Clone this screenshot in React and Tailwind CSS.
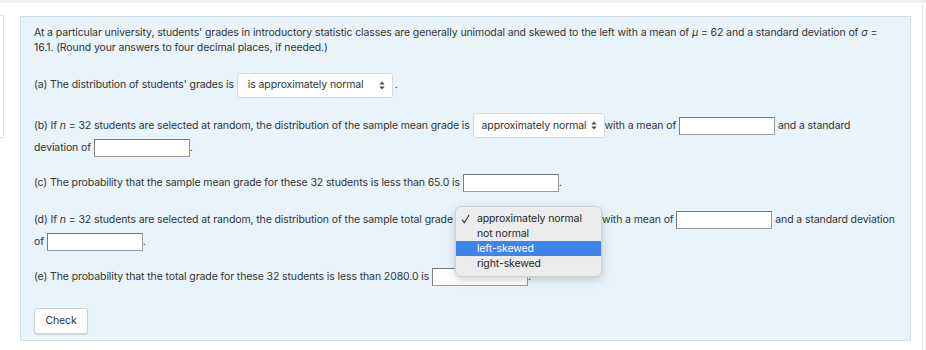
import React from "react"

const font = { fontFamily: "Inter, 'Liberation Sans', sans-serif" }

const SortIcon = () => (
  <svg width="6" height="9" viewBox="0 0 6 9" className="inline-block shrink-0">
    <path d="M3 0.5 L5.6 3.6 L0.4 3.6 Z" fill="#444" />
    <path d="M3 8.5 L5.6 5.4 L0.4 5.4 Z" fill="#444" />
  </svg>
)

const Check = () => (
  <svg width="9" height="10" viewBox="0 0 9 10">
    <path d="M1 5.6 L3.4 8.8 L8 1" fill="none" stroke="#333" strokeWidth="1.1" />
  </svg>
)

const Select = ({ label, width, pl = "pl-[8px]" }) => (
  <span
    className={`inline-flex items-center justify-between h-[25px] ${pl} pr-[7px] bg-white border border-[#dadada] rounded-[3px] align-middle ${width}`}
  >
    <span>{label}</span>
    <SortIcon />
  </span>
)

const Input = ({ width = "w-[96px]" }) => (
  <span
    className={`inline-block h-[18px] ${width} bg-white border border-[#9a9a9a] border-t-[#767676] border-l-[#7d7d7d] align-middle`}
  />
)

const Line = ({ h, mt, children }) => (
  <div className={`flex items-center whitespace-pre ${h} ${mt}`}>{children}</div>
)

const Popup = () => {
  const items = ["approximately normal", "not normal", "left-skewed", "right-skewed"]
  return (
    <div className="absolute left-0 top-[-2px] w-[147px] pt-[4px] pb-[5px] bg-[#ececec] border border-[#cfcfcf] rounded-[6px] shadow-[0_3px_10px_rgba(0,0,0,0.18)] z-10 overflow-hidden">
      {items.map((it, i) => (
        <div
          key={it}
          className={`flex items-center h-[15px] ${i === 2 ? "bg-[#3d85eb] text-white" : "text-[#262626]"}`}
        >
          <span className="w-[21px] pl-[5px] flex items-center">{i === 0 ? <Check /> : null}</span>
          <span>{it}</span>
        </div>
      ))}
    </div>
  )
}

export default function App() {
  return (
    <div className="w-[926px] h-[350px] bg-white overflow-hidden text-[10.5px] tracking-[-0.11px] text-[#333]" style={font}>
      <div className="h-[3px] bg-[#f2f2f2]" />
      <div className="flex items-start">
        <div className="w-[4px] h-[123px] mt-[12px] bg-white border border-l-0 border-[#e2e2e2]" />
        <div className="ml-[16px] mt-[13px] w-[892px] bg-[#e8f4fa] border border-[#cfe0e8] pl-[13px] pr-[10px] pt-[8px] pb-[6px]">
          <div className="leading-[15px]">
            <div className="whitespace-pre">
              At a particular university, students' grades in introductory statistic classes are generally unimodal and skewed to the left with a mean of <i>μ</i> = 62 and a standard deviation of <i>σ</i> =
            </div>
            <div>16.1. (Round your answers to four decimal places, if needed.)</div>
          </div>

          <Line h="h-[24px]" mt="mt-[18px]">
            (a) The distribution of students' grades is{" "}
            <Select label="is approximately normal" width="w-[156px]" pl="pl-[10px]" />
            <span className="ml-[2px]">.</span>
          </Line>

          <Line h="h-[25px]" mt="mt-[16px]">
            (b) If <i>n</i> = 32 students are selected at random, the distribution of the sample mean grade is{" "}
            <Select label="approximately normal" width="w-[132px]" />
            {" "}with a mean of <Input /> and a standard
          </Line>
          <Line h="h-[19px]" mt="mt-0">
            deviation of <Input />
            <span>.</span>
          </Line>

          <Line h="h-[18px]" mt="mt-[17px]">
            (c) The probability that the sample mean grade for these 32 students is less than 65.0 is <Input />
            <span>.</span>
          </Line>

          <Line h="h-[24px]" mt="mt-[16px]">
            (d) If <i>n</i> = 32 students are selected at random, the distribution of the sample total grade
            <span className="relative inline-block ml-[2px] w-[147px] h-[24px] align-middle">
              <Popup />
            </span>
            {" "}with a mean of <Input /> and a standard deviation
          </Line>
          <Line h="h-[19px]" mt="mt-0">
            of <Input />
            <span>.</span>
          </Line>

          <Line h="h-[18px]" mt="mt-[17px]">
            (e) The probability that the total grade for these 32 students is less than 2080.0 is <Input />
            <span>.</span>
          </Line>

          <div className="mt-[22px]">
            <button className="w-[54px] h-[26px] bg-white border border-[#cfcfcf] rounded-[3px] shadow-[0_1px_1px_rgba(0,0,0,0.12)] text-[10.5px] text-[#333]">
              Check
            </button>
          </div>
        </div>
        <div className="ml-[11px] mt-[2px] w-[4px] h-[345px] bg-white border-l border-[#e6e6e6]" />
      </div>
    </div>
  )
}
